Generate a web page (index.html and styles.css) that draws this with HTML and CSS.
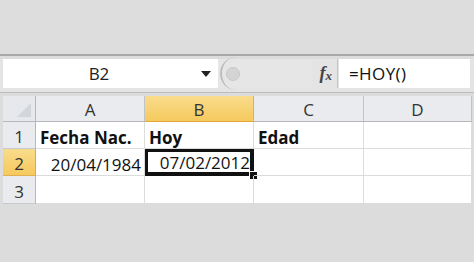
FILE: index.html
```html
<!DOCTYPE html>
<html>
<head>
<meta charset="utf-8">
<link rel="stylesheet" href="styles.css">
</head>
<body>
<div class="app">
  <div class="top"></div>
  <div class="fbar">
    <div class="namebox">
      <span class="name">B2</span>
      <span class="arrow"></span>
    </div>
    <div class="splitter">
      <span class="knob"></span>
    </div>
    <div class="fx">f<span class="x">x</span></div>
    <div class="formula">=HOY()</div>
  </div>
  <div class="gap"></div>
  <div class="sheet">
    <div class="corner"><span class="tri"></span></div>
    <div class="ch">A</div>
    <div class="ch sel">B</div>
    <div class="ch">C</div>
    <div class="ch">D</div>

    <div class="rh">1</div>
    <div class="cell b">Fecha Nac.</div>
    <div class="cell b">Hoy</div>
    <div class="cell b">Edad</div>
    <div class="cell"></div>

    <div class="rh sel">2</div>
    <div class="cell r">20/04/1984</div>
    <div class="cell r active">07/02/2012<span class="handle"></span></div>
    <div class="cell"></div>
    <div class="cell"></div>

    <div class="rh">3</div>
    <div class="cell"></div>
    <div class="cell"></div>
    <div class="cell"></div>
    <div class="cell"></div>
  </div>
  <div class="bottom"></div>
</div>
</body>
</html>
```
FILE: styles.css
```css
html, body {
  margin: 0;
  padding: 0;
}
body {
  background: #dcdcdc;
  font-family: "Open Sans", "Liberation Sans", sans-serif;
  color: #222;
}
.app {
  width: 474px;
  height: 262px;
  overflow: hidden;
  background: #dcdcdc;
}
.top {
  height: 54px;
  background: #dddddd;
  border-bottom: 2px solid #a9a9a9;
}
.fbar {
  display: flex;
  height: 29px;
  margin-top: 3px;
  padding-left: 3px;
  background: #e4e4e4;
}
.namebox {
  width: 215px;
  background: #fff;
  display: flex;
  align-items: center;
}
.name {
  flex: 1;
  text-align: center;
  font-size: 17px;
  margin-left: -6px;
  color: #222;
}
.arrow {
  width: 0;
  height: 0;
  border-left: 5px solid transparent;
  border-right: 5px solid transparent;
  border-top: 6px solid #222;
  margin-right: 7px;
}
.splitter {
  width: 94px;
  background: #e6e6e6;
  position: relative;
}
.splitter::before {
  content: "";
  position: absolute;
  left: 2px;
  top: -2px;
  width: 30px;
  height: 33px;
  border-left: 2px solid #bdbdbd;
  border-radius: 50%;
}
.knob {
  position: absolute;
  left: 8px;
  top: 8px;
  width: 12px;
  height: 12px;
  border-radius: 50%;
  background: #d4d4d4;
  border: 1px solid #c8c8c8;
}
.fx {
  width: 20px;
  font-family: "Liberation Serif", serif;
  font-style: italic;
  font-weight: bold;
  font-size: 18px;
  color: #444;
  display: flex;
  align-items: center;
  justify-content: flex-end;
  padding-right: 5px;
  border-right: 1px solid #c4c4c4;
}
.fx .x {
  font-size: 13px;
  margin-top: 4px;
}
.formula {
  flex: 1;
  background: #fff;
  margin-left: 1px;
  margin-right: 4px;
  font-size: 17px;
  display: flex;
  align-items: center;
  padding-left: 10px;
  letter-spacing: 0.4px;
  color: #111;
}
.gap {
  height: 4px;
  border-bottom: 1px solid #bcbcbc;
  background: #e4e4e4;
  margin-bottom: 3px;
}
.sheet {
  display: grid;
  grid-template-columns: 33px 109px 109px 110px 108px;
  grid-template-rows: 26px 27px 27px 28px;
  margin-left: 3px;
  width: 469px;
  background: #fff;
}
.corner {
  background: #e6e8eb;
  border-right: 1px solid #b4b8be;
  border-bottom: 1px solid #b4b8be;
  position: relative;
}
.tri {
  position: absolute;
  right: 4px;
  bottom: 4px;
  width: 0;
  height: 0;
  border-left: 14px solid transparent;
  border-bottom: 14px solid #d2d5da;
}
.ch {
  background: #e9ebee;
  border-right: 1px solid #c0c4ca;
  border-bottom: 1px solid #b4b8be;
  display: flex;
  align-items: center;
  justify-content: center;
  padding-top: 2px;
  font-size: 17px;
  color: #333;
}
.ch.sel {
  background: linear-gradient(#f9dc8c, #f5c95d);
  border-bottom: 1px solid #e2a93a;
  border-right-color: #e2b050;
}
.rh {
  background: #e9ebee;
  border-right: 1px solid #b4b8be;
  border-bottom: 1px solid #c6cad0;
  display: flex;
  align-items: center;
  justify-content: center;
  padding-top: 3px;
  font-size: 17px;
  color: #333;
}
.rh.sel {
  background: linear-gradient(#f9dc8c, #f5c95d);
  border-right-color: #e2a93a;
  border-bottom-color: #e2b050;
}
.cell {
  border-right: 1px solid #dadcdd;
  border-bottom: 1px solid #dadcdd;
  font-size: 17px;
  line-height: 20px;
  display: flex;
  align-items: flex-end;
  padding: 0 3px 0 4px;
  color: #111;
  white-space: nowrap;
  position: relative;
}
.cell.b {
  font-weight: bold;
}
.cell.r {
  justify-content: flex-end;
}
.cell.active {
  box-shadow: inset 0 0 0 3px #111;
  border-right-color: #111;
  border-bottom-color: #111;
  padding-right: 3px;
  padding-bottom: 2px;
}
.handle {
  position: absolute;
  right: -5px;
  bottom: -5px;
  width: 7px;
  height: 7px;
  background: #111;
  border: 1px solid #fff;
}
.bottom {
  height: 60px;
  background: #dcdcdc;
}
```
